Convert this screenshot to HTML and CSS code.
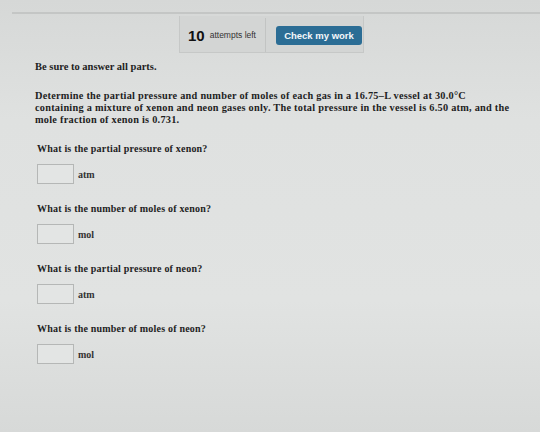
FILE: index.html
```html
<!DOCTYPE html>
<html>
<head>
<meta charset="utf-8">
<link rel="stylesheet" href="styles.css">
</head>
<body>
<div class="page">
  <div class="topline"></div>
  <div class="header">
    <div class="attempts"><span class="num">10</span><span class="lbl">attempts left</span></div>
    <div class="btnwrap"><button class="check">Check my work</button></div>
  </div>
  <div class="content">
    <p class="note">Be sure to answer all parts.</p>
    <p class="problem">Determine the partial pressure and number of moles of each gas in a 16.75&ndash;L vessel at 30.0°C containing a mixture of xenon and neon gases only. The total pressure in the vessel is 6.50 atm, and the mole fraction of xenon is 0.731.</p>
    <div class="q">
      <p class="qtext">What is the partial pressure of xenon?</p>
      <div class="ans"><span class="box"></span><span class="unit">atm</span></div>
    </div>
    <div class="q">
      <p class="qtext">What is the number of moles of xenon?</p>
      <div class="ans"><span class="box"></span><span class="unit">mol</span></div>
    </div>
    <div class="q">
      <p class="qtext">What is the partial pressure of neon?</p>
      <div class="ans"><span class="box"></span><span class="unit">atm</span></div>
    </div>
    <div class="q">
      <p class="qtext">What is the number of moles of neon?</p>
      <div class="ans"><span class="box"></span><span class="unit">mol</span></div>
    </div>
  </div>
</div>
</body>
</html>
```
FILE: styles.css
```css
html, body {
  margin: 0;
  padding: 0;
}
body {
  width: 540px;
  height: 432px;
  overflow: hidden;
  background: linear-gradient(to bottom, #d6d8d7 0px, #dfe1e0 120px, #e1e3e2 300px, #d7d9d8 432px);
  font-family: "Liberation Serif", "Times New Roman", serif;
  color: #1e1e1e;
}
.page {
  padding-top: 12px;
}
.topline {
  margin-left: 12px;
  height: 2px;
  background: #c4c6c5;
}
.header {
  display: flex;
  margin-left: 179px;
  width: 185px;
  height: 37px;
  margin-top: 2px;
  padding-top: 2px;
  background: #d3d5d4;
  border: 1px solid #c6c8c7;
  border-top: none;
  box-sizing: border-box;
}
.attempts {
  width: 86px;
  border-right: 1px solid #c2c4c3;
  display: flex;
  align-items: center;
  padding-left: 8px;
  box-sizing: border-box;
  font-family: "Liberation Sans", Arial, sans-serif;
}
.num {
  font-size: 15px;
  font-weight: bold;
  color: #111;
  margin-right: 5px;
}
.lbl {
  font-size: 8.5px;
  color: #333;
}
.btnwrap {
  flex: 1;
  display: flex;
  align-items: center;
  padding-left: 10px;
}
.check {
  width: 86px;
  height: 19px;
  padding: 0;
  border: none;
  border-radius: 3px;
  background: #2b6d95;
  color: #f4f7fa;
  font-family: "Liberation Sans", Arial, sans-serif;
  font-weight: bold;
  font-size: 9.5px;
}
.content {
  padding-left: 35px;
  padding-top: 8px;
}
p {
  margin: 0;
}
.note {
  font-weight: bold;
  font-size: 10.5px;
  line-height: 12px;
}
.problem {
  margin-top: 17px;
  width: 477px;
  font-weight: bold;
  font-size: 10.3px;
  line-height: 12px;
  letter-spacing: 0.25px;
}
.q {
  padding-left: 2px;
}
.qtext {
  margin-top: 17px;
  font-weight: bold;
  font-size: 10px;
  line-height: 12px;
  letter-spacing: 0.2px;
}
.q + .q .qtext {
  margin-top: 19px;
}
.ans {
  display: flex;
  align-items: center;
  margin-top: 9px;
}
.box {
  width: 35px;
  height: 18px;
  border: 1px solid #b5b7b6;
  background: #e3e5e4;
}
.unit {
  margin-left: 4px;
  font-weight: bold;
  font-size: 10px;
  color: #333;
}
```
